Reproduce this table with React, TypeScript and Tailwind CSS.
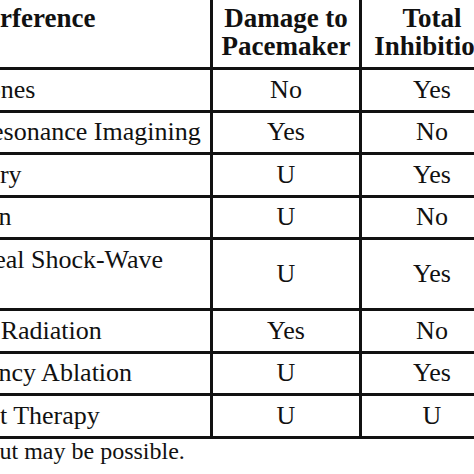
import React from "react";

type Row = { name: string[]; d: string; t: string; tall?: boolean };

const rows: Row[] = [
  { name: ["Cellular Phones"], d: "No", t: "Yes" },
  { name: ["Magnetic Resonance Imagining"], d: "Yes", t: "No" },
  { name: ["Electrocautery"], d: "U", t: "Yes" },
  { name: ["Defibrillation"], d: "U", t: "No" },
  { name: ["Extracorporeal Shock-Wave", "Lithotripsy"], d: "U", t: "Yes", tall: true },
  { name: ["Therapeutic Radiation"], d: "Yes", t: "No" },
  { name: ["Radiofrequency Ablation"], d: "U", t: "Yes" },
  { name: ["Microcurrent Therapy"], d: "U", t: "U" },
];

export default function App() {
  return (
    <div className="w-[474px] h-[474px] overflow-hidden bg-white text-[#111] font-['Liberation_Serif','Times_New_Roman',serif]">
      <div className="-ml-[140px] w-[642px]">
        {/* header */}
        <div className="flex h-[70px] border-b-[3px] border-[#111]">
          <div className="w-[353px] border-r-[3px] border-[#111] pl-[1px] pt-[4px] text-[27px] leading-[28px] font-bold whitespace-nowrap">
            Type of Interference
          </div>
          <div className="w-[149px] border-r-[3px] border-[#111] pt-[4px] text-center text-[27px] leading-[28px] font-bold whitespace-nowrap">
            Damage to
            <br />
            Pacemaker
          </div>
          <div className="w-[140px] pt-[4px] text-center text-[27px] leading-[28px] font-bold whitespace-nowrap">
            Total
            <br />
            Inhibition
          </div>
        </div>
        {rows.map((r, i) => (
          <div
            key={i}
            className={
              "flex border-b-[3px] border-[#111] text-[26px] leading-[28px] " +
              (r.tall ? "h-[71px]" : "h-[42.5px]")
            }
          >
            <div className="w-[353px] border-r-[3px] border-[#111] pl-[10px] flex flex-col justify-center whitespace-nowrap">
              {r.name.map((n, j) => (
                <span key={j}>{n}</span>
              ))}
            </div>
            <div className="w-[149px] border-r-[3px] border-[#111] flex items-center justify-center">
              {r.d}
            </div>
            <div className="w-[140px] flex items-center justify-center">{r.t}</div>
          </div>
        ))}
        <div className="-ml-[16px] text-[24px] leading-[24px] whitespace-nowrap">
          U = Unknown but may be possible.
        </div>
      </div>
    </div>
  );
}
